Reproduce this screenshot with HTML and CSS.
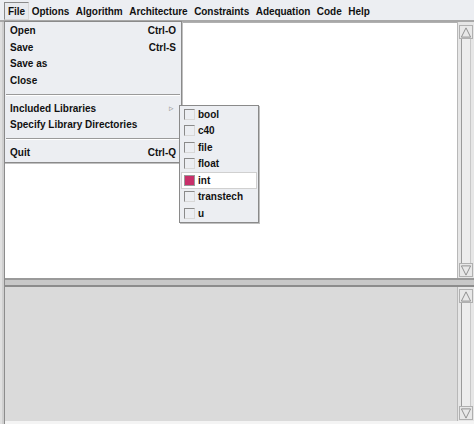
FILE: index.html
```html
<!DOCTYPE html>
<html>
<head>
<meta charset="utf-8">
<link rel="stylesheet" href="styles.css">
</head>
<body>
<div class="window">
  <div class="menubar">
    <span class="mitem active">File</span>
    <span class="mitem">Options</span>
    <span class="mitem">Algorithm</span>
    <span class="mitem">Architecture</span>
    <span class="mitem">Constraints</span>
    <span class="mitem">Adequation</span>
    <span class="mitem">Code</span>
    <span class="mitem">Help</span>
  </div>
  <div class="body">
    <div class="leftstrip"></div>
    <div class="split">
      <div class="pane top">
        <div class="area white"></div>
        <div class="scroll">
          <div class="arrow up"><svg width="13" height="13" viewBox="0 0 13 13"><path d="M6.5 1.5 L11.5 11.5 L1.5 11.5 Z" fill="none" stroke="#8a8a8a" stroke-width="1"/></svg></div>
          <div class="track"></div>
          <div class="arrow down"><svg width="13" height="13" viewBox="0 0 13 13"><path d="M1.5 1.5 L11.5 1.5 L6.5 11.5 Z" fill="none" stroke="#8a8a8a" stroke-width="1"/></svg></div>
        </div>
      </div>
      <div class="divider"></div>
      <div class="pane bottom">
        <div class="area gray"></div>
        <div class="scroll">
          <div class="arrow up"><svg width="13" height="13" viewBox="0 0 13 13"><path d="M6.5 1.5 L11.5 11.5 L1.5 11.5 Z" fill="none" stroke="#8a8a8a" stroke-width="1"/></svg></div>
          <div class="track"></div>
          <div class="arrow down"><svg width="13" height="13" viewBox="0 0 13 13"><path d="M1.5 1.5 L11.5 1.5 L6.5 11.5 Z" fill="none" stroke="#8a8a8a" stroke-width="1"/></svg></div>
        </div>
      </div>
    </div>
  </div>

  <div class="dropdown filemenu">
    <div class="row"><span>Open</span><span class="key">Ctrl-O</span></div>
    <div class="row"><span>Save</span><span class="key">Ctrl-S</span></div>
    <div class="row"><span>Save as</span></div>
    <div class="row"><span>Close</span></div>
    <div class="sep"></div>
    <div class="row"><span>Included Libraries</span><span class="sub">&#9657;</span></div>
    <div class="row"><span>Specify Library Directories</span></div>
    <div class="sep"></div>
    <div class="row"><span>Quit</span><span class="key">Ctrl-Q</span></div>
  </div>

  <div class="dropdown libmenu">
    <div class="crow"><span class="box"></span>bool</div>
    <div class="crow"><span class="box"></span>c40</div>
    <div class="crow"><span class="box"></span>file</div>
    <div class="crow"><span class="box"></span>float</div>
    <div class="crow sel"><span class="box on"></span>int</div>
    <div class="crow"><span class="box"></span>transtech</div>
    <div class="crow"><span class="box"></span>u</div>
  </div>
</div>
</body>
</html>
```
FILE: styles.css
```css
* { box-sizing: border-box; }
html, body { margin: 0; padding: 0; }
body {
  width: 474px;
  height: 424px;
  overflow: hidden;
  font-family: "Liberation Sans", Arial, sans-serif;
  font-weight: bold;
  font-size: 10px;
  color: #111;
  background: #e4e4e4;
}
.window {
  position: relative;
  width: 474px;
  height: 424px;
  display: flex;
  flex-direction: column;
}
.menubar {
  height: 22px;
  flex: none;
  display: flex;
  align-items: center;
  padding-left: 5px;
  padding-top: 1px;
  background: #eceef2;
  border-bottom: 2px solid #a8a8a8;
}
.mitem {
  padding: 0 2.3px;
  height: 18px;
  line-height: 17px;
  border: 1px solid transparent;
  letter-spacing: -0.05px;
}
.mitem.active {
  border-color: #8a8a8a #d8d8d8 #d8d8d8 #8a8a8a;
  background: #e8eaee;
  margin-left: -1px;
  padding: 0 2.5px 0 3px;
}
.body {
  flex: 1;
  display: flex;
  min-height: 0;
}
.leftstrip {
  width: 5px;
  flex: none;
  background: #cfcfcf;
  border-left: 2px solid #e0e0e0;
  border-right: 1px solid #8c8c8c;
}
.split {
  flex: 1;
  display: flex;
  flex-direction: column;
}
.pane {
  display: flex;
}
.pane.top {
  height: 256px;
  background: #fff;
}
.pane.bottom {
  flex: 1;
  background: #dadada;
  border-bottom: 3px solid #f4f4f4;
}
.area { flex: 1; }
.area.white { background: #fff; border-top: 1px solid #b0b0b0; }
.area.gray { background: #dadada; }
.divider {
  height: 9px;
  flex: none;
  background: #c8c8c8;
  border-top: 2px solid #9a9a9a;
  border-bottom: 2px solid #8c8c8c;
}
.scroll {
  width: 17px;
  flex: none;
  display: flex;
  flex-direction: column;
  background: #e6e6e6;
  border-left: 1px solid #b8b8b8;
  padding: 2px 1px 1px 1px;
}
.pane.top .scroll { padding-top: 3px; }
.arrow {
  height: 14px;
  flex: none;
  display: flex;
  align-items: center;
  justify-content: center;
  border: 1px solid #b0b0b0;
  background: #e8e8e8;
}
.arrow svg { display: block; }
.track {
  flex: 1;
  margin: 0 2px;
  border-left: 1px solid #9a9a9a;
  border-right: 1px solid #c8c8c8;
  background: #ededed;
}

.dropdown {
  position: absolute;
  background: #eceef2;
  border: 1px solid #8a8a8a;
  box-shadow: 1px 1px 0 #c0c0c0;
}
.filemenu {
  left: 4px;
  top: 21px;
  width: 178px;
  padding: 0 0 1px;
}
.row {
  display: flex;
  justify-content: space-between;
  align-items: center;
  height: 16.7px;
  padding: 0 5px 0 5px;
}
.sub { color: #999; font-size: 9px; font-weight: normal; margin-right: 2px; }
.sep {
  height: 11px;
  margin: 0 1px;
  position: relative;
}
.sep::after {
  content: "";
  position: absolute;
  left: 0; right: 0; top: 5px;
  border-top: 1px solid #9a9a9a;
  border-bottom: 1px solid #fff;
}
.libmenu {
  left: 179px;
  top: 105px;
  width: 80px;
  padding: 0 1px;
}
.crow {
  display: flex;
  align-items: center;
  height: 16.5px;
  padding-left: 3px;
  gap: 3px;
}
.crow.sel {
  background: #fff;
  border: 1px solid #d0d0d0;
  padding-left: 2px;
}
.box {
  width: 11px;
  height: 11px;
  border: 1px solid #8a8a8a;
  border-right-color: #d8d8d8;
  border-bottom-color: #d8d8d8;
  background: #eceef2;
  flex: none;
}
.box.on {
  background: #c8306a;
  border-color: #9a9a9a;
}
```
